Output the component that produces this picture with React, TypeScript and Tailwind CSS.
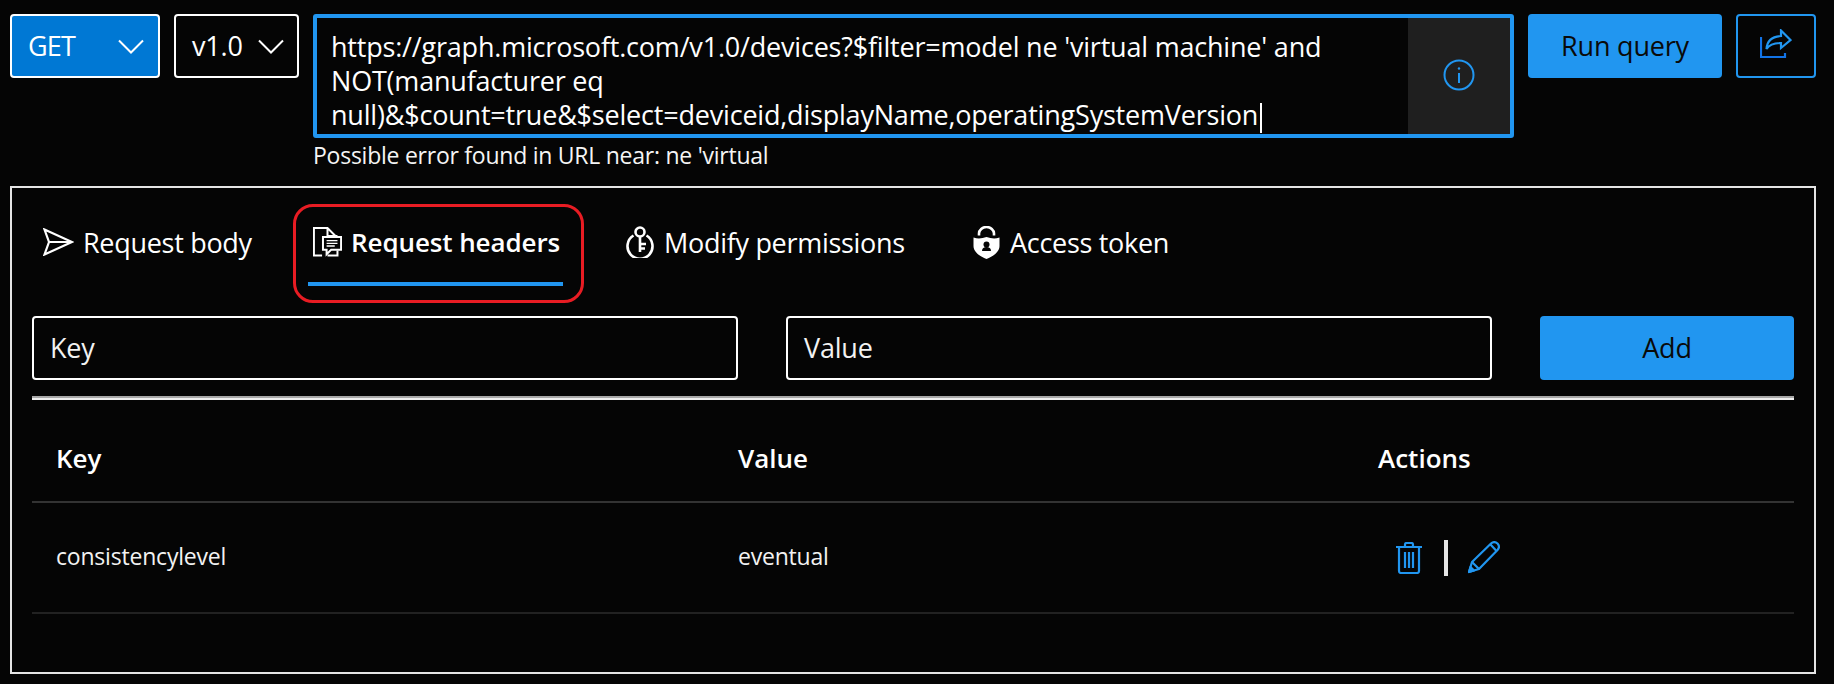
const font = "font-['Open_Sans','Noto_Sans',sans-serif]";

function Chevron() {
  return (
    <svg width="26" height="15" viewBox="0 0 26 15" fill="none" stroke="currentColor" strokeWidth="2">
      <path d="M1 1.5 13 13.5 25 1.5" />
    </svg>
  );
}

function SendIcon() {
  return (
    <svg width="31" height="28" viewBox="0 0 31 28" fill="none" stroke="#fff" strokeWidth="2.2" strokeLinejoin="miter">
      <path d="M1.5 1.5 29 14 1.5 26.5 6 14ZM6 14H29" />
    </svg>
  );
}

function HeadersIcon() {
  return (
    <svg width="29" height="32" viewBox="0 0 32 33" fill="none" stroke="#fff" strokeWidth="2.2">
      <path d="M10 31.5H1V1H16L27 12V15M16 1V10H27M27 26V31.5H16" />
      <path d="M11 11H31V25H20L15 30V25H11Z" fill="#050505" />
      <path d="M15 15H27M15 18H27M15 21H24" strokeWidth="1.6" />
    </svg>
  );
}

function KeyIcon() {
  return (
    <svg width="28" height="32" viewBox="0 0 28 32" fill="none" stroke="#fff" strokeWidth="2.6">
      <circle cx="14" cy="6" r="4.5" />
      <path d="M14 10.5V26M14 18H20M14 22.5H19" />
      <path d="M7.5 9.5A12.5 12.5 0 1 0 20.5 9.5" />
    </svg>
  );
}

function LockIcon() {
  return (
    <svg width="27" height="33" viewBox="0 0 27 33">
      <path d="M6 9.5V7.5A7.5 6.5 0 0 1 21 7.5V9.5" fill="none" stroke="#fff" strokeWidth="2.6" />
      <path d="M0.5 11.5C5 13 9 12.5 13.5 11C18 12.5 22 13 26.5 11.5V20C26.5 26 20 30.5 13.5 33C7 30.5 0.5 26 0.5 20Z" fill="#fff" />
      <circle cx="13.5" cy="18.5" r="3" fill="#050505" />
      <path d="M9 25C9 22 11 21 13.5 21S18 22 18 25Z" fill="#050505" />
    </svg>
  );
}

function InfoIcon() {
  return (
    <svg width="32" height="32" viewBox="0 0 32 32" fill="none" stroke="#2196f0" strokeWidth="2">
      <circle cx="16" cy="16" r="14.5" />
      <path d="M16 14V24" strokeWidth="2" />
      <circle cx="16" cy="9.5" r="1.2" fill="#2196f0" stroke="none" />
    </svg>
  );
}

function ShareIcon() {
  return (
    <svg width="32" height="29" viewBox="0 0 32 29" fill="none" stroke="#2196f0" strokeWidth="2.2">
      <path d="M1 8V28H25V24" stroke="#1273e6" />
      <path d="M21 1.5 30.5 11 21 19V14C13 14 9 16 6.5 20C7 12 12 7.5 21 7Z" />
    </svg>
  );
}

function TrashIcon() {
  return (
    <svg width="26" height="32" viewBox="0 0 26 32" fill="none" stroke="#2196f0" strokeWidth="2.2">
      <path d="M0 5H26M9 5V2.5C9 1.5 9.5 1 10.5 1H15.5C16.5 1 17 1.5 17 2.5V5" />
      <path d="M3 5V29C3 30 4 31 5 31H21C22 31 23 30 23 29V5" />
      <path d="M9 10V26M13 10V26M17 10V26" />
    </svg>
  );
}

function PencilIcon() {
  return (
    <svg width="33" height="33" viewBox="0 0 33 33" fill="none" stroke="#2196f0" strokeWidth="2.2" strokeLinejoin="round">
      <path d="M2 31 5 21 24 2.5C26 0.8 28.5 0.8 30.5 2.5C32.3 4.5 32.3 7 30.5 9L12 28Z" />
      <path d="M5 21 12 28M23.5 3.5 29.5 10" />
      <path d="M2 31 3.5 26 7 29.5Z" fill="#2196f0" />
    </svg>
  );
}

function Tab({ icon, label, active, className }: { icon: React.ReactNode; label: string; active?: boolean; className: string }) {
  return (
    <div className={`relative flex h-[98px] items-center pt-[10px] ${className}`}>
      {icon}
      <span className={`whitespace-nowrap leading-none text-white ${active ? "text-[26px] font-semibold tracking-[-0.1px]" : "text-[27px] tracking-[-0.3px]"}`}>{label}</span>
      {active && <div className="absolute bottom-0 left-0 right-0 h-[4px] bg-[#2196f0]" />}
    </div>
  );
}

export default function App() {
  return (
    <div className={`h-[684px] w-[1834px] overflow-hidden bg-[#050505] pl-[10px] pt-[14px] text-white ${font}`}>
      <div className="flex items-start">
        <div className="flex h-[64px] w-[150px] items-center justify-between rounded-[4px] border-2 border-white bg-[#0078d4] pl-[16px] pr-[14px] text-[27px] tracking-[-0.8px]">
          GET
          <Chevron />
        </div>
        <div className="ml-[14px] flex h-[64px] w-[125px] items-center justify-between rounded-[4px] border-2 border-white pl-[16px] pr-[13px] text-[27px] tracking-[-0.2px]">
          v1.0
          <Chevron />
        </div>
        <div className="ml-[14px] w-[1201px]">
          <div className="flex h-[124px] overflow-hidden rounded-[3px] border-[4px] border-[#2196f0]">
            <div className="w-[1091px] whitespace-nowrap pl-[14px] pt-[12px] text-[27px] leading-[34px] tracking-[-0.2px]">
              https://graph.microsoft.com/v1.0/devices?$filter=model ne 'virtual machine' and
              <br />
              NOT(manufacturer eq
              <br />
              null)&amp;$count=true&amp;$select=deviceid,displayName,operatingSystemVersion
              <span className="ml-[2px] inline-block h-[30px] w-[2px] bg-white align-middle" />
            </div>
            <div className="flex flex-1 items-center justify-center bg-[#1f1f1f] pb-[2px]">
              <InfoIcon />
            </div>
          </div>
          <div className="mt-[4px] text-[23px] leading-[26px] tracking-[-0.25px] text-[#f5f5f5]">Possible error found in URL near: ne 'virtual</div>
        </div>
        <button className="ml-[14px] h-[64px] w-[194px] rounded-[4px] bg-[#2196f0] text-[27px] tracking-[-0.2px] text-[#0a0a0a]">Run query</button>
        <button className="ml-[14px] flex h-[64px] w-[80px] items-center justify-center rounded-[4px] border-2 border-[#2196f0] pb-[6px]">
          <ShareIcon />
        </button>
      </div>

      <div className="relative mt-[18px] h-[488px] w-[1806px] border-2 border-[#e5e5e5] px-[20px]">
        <div className="flex">
          <Tab icon={<span className="ml-[11px] mr-[9px] flex"><SendIcon /></span>} label="Request body" className="w-[276px]" />
          <Tab icon={<span className="ml-[5px] mr-[9px] flex"><HeadersIcon /></span>} label="Request headers" active className="w-[255px]" />
          <Tab icon={<span className="ml-[63px] mr-[10px] flex"><KeyIcon /></span>} label="Modify permissions" className="w-[410px]" />
          <Tab icon={<span className="mr-[10px] flex"><LockIcon /></span>} label="Access token" className="w-[200px]" />
        </div>
        {/* annotation drawn over the screenshot */}
        <div className="absolute left-[281px] top-[16px] h-[99px] w-[291px] rounded-[20px] border-[3px] border-[#e81c23]" />

        <div className="mt-[30px] flex gap-[48px]">
          <div className="flex h-[64px] w-[706px] items-center rounded-[4px] border-2 border-white pl-[16px] text-[27px] tracking-[-0.2px] text-[#f2f2f2]">Key</div>
          <div className="flex h-[64px] w-[706px] items-center rounded-[4px] border-2 border-white pl-[16px] text-[27px] tracking-[-0.2px] text-[#f2f2f2]">Value</div>
          <button className="h-[64px] w-[254px] rounded-[4px] bg-[#2196f0] text-[27px] tracking-[-0.2px] text-[#0a0a0a]">Add</button>
        </div>
        <div className="mt-[16px] h-[4px] w-[1762px] border-b-2 border-[#eeeeee] bg-[#a8a8a8]" />

        <div className="w-[1762px]">
          <div className="grid h-[103px] grid-cols-[706px_640px_1fr] items-center border-b-2 border-[#333333] pt-[16px] text-[26px] font-semibold">
            <span className="pl-[24px]">Key</span>
            <span>Value</span>
            <span>Actions</span>
          </div>
          <div className="grid h-[111px] grid-cols-[706px_640px_1fr] items-center border-b-2 border-[#222222] pb-[2px] text-[23px] tracking-[-0.2px] text-[#f2f2f2]">
            <span className="pl-[24px]">consistencylevel</span>
            <span>eventual</span>
            <span className="flex items-center pl-[18px] pt-[2px]">
              <TrashIcon />
              <span className="ml-[22px] mr-[19px] h-[36px] w-[4px] bg-[#e5e5e5]" />
              <PencilIcon />
            </span>
          </div>
        </div>
      </div>
    </div>
  );
}
